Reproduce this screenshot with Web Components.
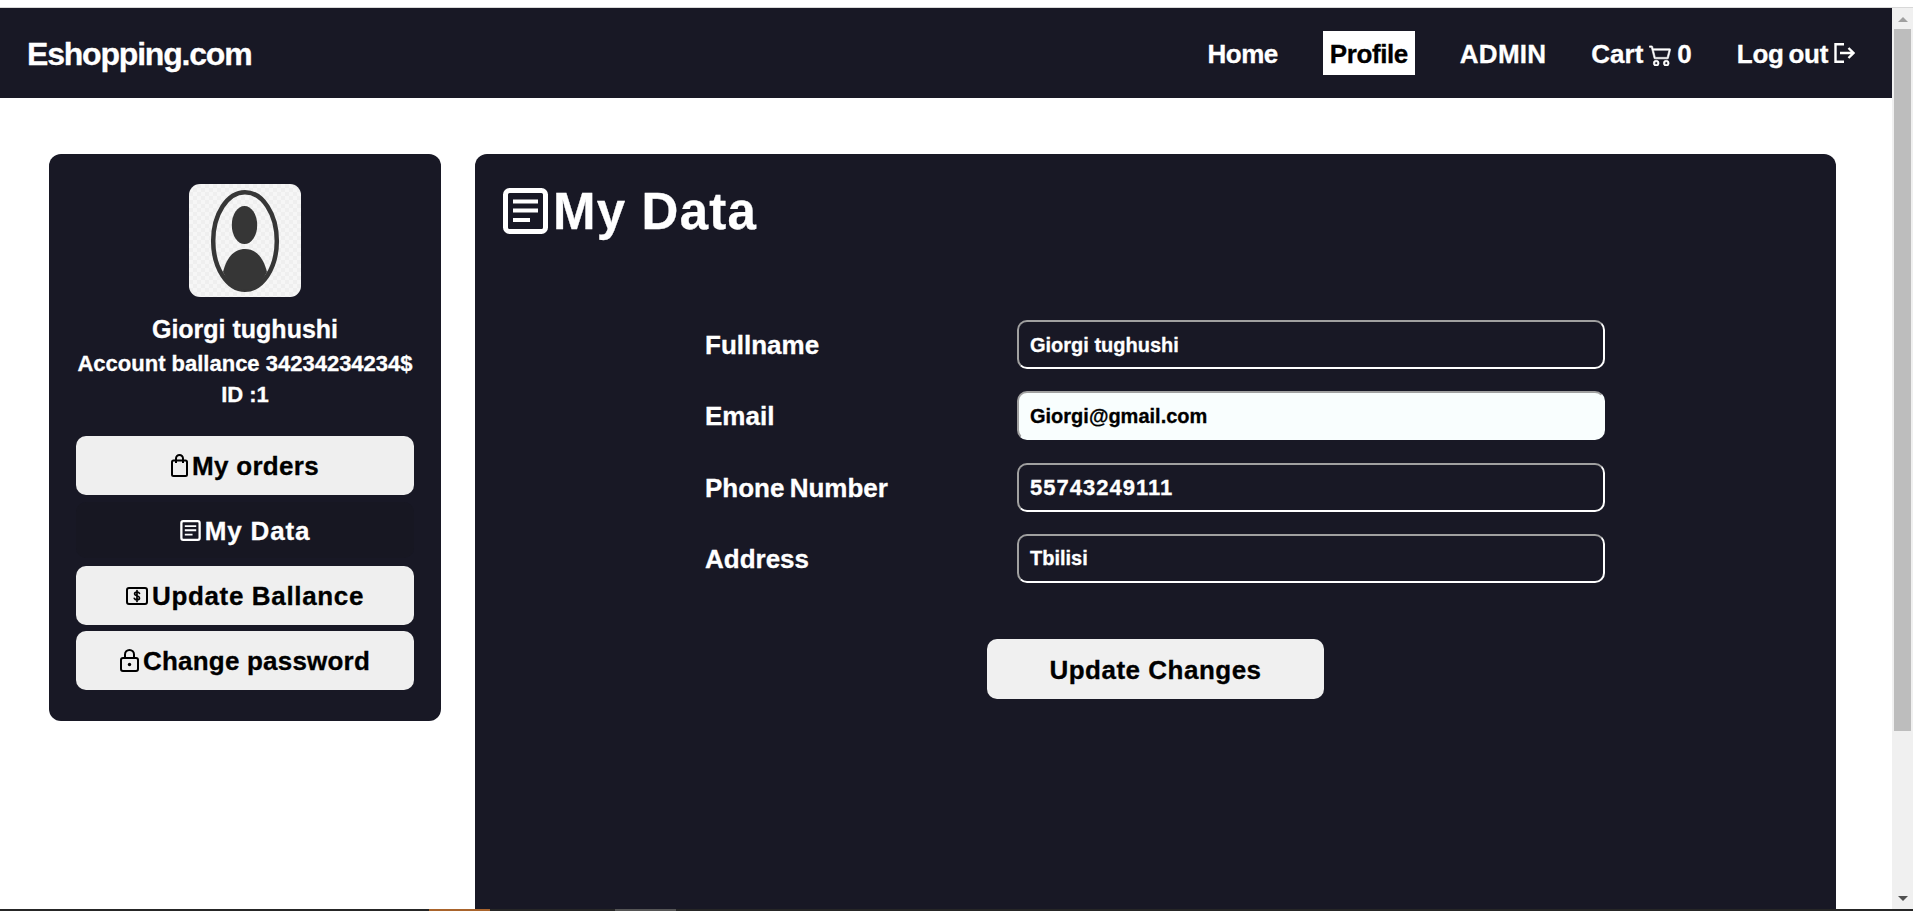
<!DOCTYPE html>
<html>
<head>
<meta charset="utf-8">
<title>Eshopping.com</title>
<style>
  html, body { margin: 0; height: 916px; overflow: hidden; background: #fff; }
  body { font-family: "Liberation Sans", Arial, sans-serif; font-weight: 700; -webkit-text-stroke: .3px; }
</style>
</head>
<body>
<shop-window>
  <shop-navbar></shop-navbar>
  <profile-page>
    <profile-sidebar slot="side" name="Giorgi tughushi" balance="34234234234" user-id="1"></profile-sidebar>
    <my-data-panel>
      <data-field label="Fullname" value="Giorgi tughushi"></data-field>
      <data-field label="Email" value="Giorgi@gmail.com" filled></data-field>
      <data-field label="Phone Number" value="55743249111" style="--value-size: 22px; --value-spacing: 1px"></data-field>
      <data-field label="Address" value="Tbilisi"></data-field>
    </my-data-panel>
  </profile-page>
</shop-window>

<script>
const icons = {
  bag: `<svg viewBox="0 0 17 23" width="17" height="23" fill="none" stroke="currentColor" stroke-width="2"><rect x="1" y="6.500" width="15" height="15.500" rx="1.500"/><path d="M5 9V4.500a3.500 3.500 0 0 1 7 0V9"/></svg>`,
  data: `<svg viewBox="0 0 45 46" width="21" height="21" fill="none" stroke="currentColor"><rect x="2.500" y="2.500" width="40" height="41" rx="4" stroke-width="5"/><path stroke-width="4" d="M10 13.500h25M10 22.500h25M10 32h17"/></svg>`,
  cash: `<svg viewBox="0 0 22 18" width="22" height="18" fill="none" stroke="currentColor" stroke-linecap="round"><rect x="1" y="1" width="20" height="16" rx="2" stroke-width="2"/><path stroke-width="1.700" d="M13.500 6.300C13 5.300 12.200 5 11 5c-1.400 0-2.400.7-2.400 1.900 0 2.500 4.900 1.300 4.900 4 0 1.200-1 1.900-2.500 1.900-1.300 0-2.200-.5-2.700-1.500M11 3.600v10.800"/></svg>`,
  lock: `<svg viewBox="0 0 19 23" width="19" height="23" fill="none" stroke="currentColor" stroke-width="2"><rect x="1" y="9" width="17" height="13" rx="2"/><path d="M5 9V5.500a4.500 4.500 0 0 1 9 0V9"/><circle cx="9.500" cy="15.500" r="1.700" fill="currentColor" stroke="none"/></svg>`,
  cart: `<svg viewBox="0 0 16 16" fill="currentColor" stroke="currentColor" stroke-width=".45"><path d="M0 2.500A.5.5 0 0 1 .5 2H2a.5.5 0 0 1 .485.379L2.890 4H14.500a.5.5 0 0 1 .485.621l-1.500 6A.5.5 0 0 1 13 11H4a.5.5 0 0 1-.485-.379L1.610 3H.5a.5.5 0 0 1-.5-.5zM3.140 5l1.250 5h8.220l1.250-5H3.140zM5 13a1 1 0 1 0 0 2 1 1 0 0 0 0-2zm-2 1a2 2 0 1 1 4 0 2 2 0 0 1-4 0zm9-1a1 1 0 1 0 0 2 1 1 0 0 0 0-2zm-2 1a2 2 0 1 1 4 0 2 2 0 0 1-4 0z"/></svg>`,
  logout: `<svg viewBox="0 0 21 20" fill="none" stroke="currentColor" stroke-width="2.400"><path d="M10 1.200H1.500v17.600H10"/><path d="M6 10h13.500M14.500 5l5 5-5 5"/></svg>`
};

class ShopWindow extends HTMLElement {
  constructor(){
    super();
    this.attachShadow({mode: 'open'});
    this.shadowRoot.innerHTML = `
      <style>
        :host { display: flex; flex-direction: column; height: 916px; box-sizing: border-box; padding: 7px 0 5px; }
        .top { height: 1px; background: #d8d8d8; margin-right: 7px; flex: none; }
        .middle { flex: 1; display: flex; min-height: 0; margin-right: 7px; }
        .content { flex: 1; min-width: 0; display: flex; flex-direction: column; overflow: hidden; }
        .bar { flex: none; width: 21px; background: #f0f0f0; display: flex; flex-direction: column; align-items: center; }
        .arrow { width: 0; height: 0; border-left: 5px solid transparent; border-right: 5px solid transparent; flex: none; }
        .up { border-bottom: 5px solid #a0a0a0; margin-top: 9px; }
        .down { border-top: 5px solid #505050; margin: auto 0 8px; }
        .thumb { width: 17px; height: 702px; background: #bdbdbd; margin-top: 7px; flex: none; }
        .dock { flex: none; height: 2px; background: #262626; display: flex; margin-right: 7px; }
        .dock i { display: block; height: 2px; }
      </style>
      <div class="top"></div>
      <div class="middle">
        <div class="content"><slot></slot></div>
        <div class="bar">
          <div class="arrow up"></div>
          <div class="thumb"></div>
          <div class="arrow down"></div>
        </div>
      </div>
      <div class="dock">
        <i style="width:429px"></i><i style="width:61px;background:#a9642c"></i>
        <i style="width:125px"></i><i style="width:61px;background:#555"></i>
      </div>
    `;
  }
}

class ShopNavbar extends HTMLElement {
  constructor(){
    super();
    this.attachShadow({mode: 'open'});
    this.shadowRoot.innerHTML = `
      <style>
        :host { display: flex; flex: none; height: 90px; align-items: center; justify-content: space-between; background: #181825; color: #fff; padding: 0 37px 0 27px; }
        .logo { font-size: 32px; letter-spacing: -1.2px; }
        nav { display: flex; gap: 45px; font-size: 26px; }
        a { display: flex; align-items: center; box-sizing: border-box; height: 44px; padding-top: 2px; color: inherit; text-decoration: none; }
        a.home { letter-spacing: -.5px; }
        a.active { background: #fff; color: #000; padding: 2px 7px 0; letter-spacing: -.4px; }
        a.admin { letter-spacing: .25px; }
        a.out { letter-spacing: -.3px; word-spacing: -2px; }
        .cart { display: block; width: 23px; height: 23px; margin: -2px 5px 0 6px; }
        .out svg { display: block; width: 21px; height: 20px; margin: -2px 0 0 6px; }
      </style>
      <a class="logo" href="#">Eshopping.com</a>
      <nav>
        <a class="home" href="#">Home</a>
        <a class="active" href="#">Profile</a>
        <a class="admin" href="#">ADMIN</a>
        <a href="#">Cart<span class="cart">${icons.cart}</span>0</a>
        <a class="out" href="#">Log out${icons.logout}</a>
      </nav>
    `;
  }
}

class ProfilePage extends HTMLElement {
  constructor(){
    super();
    this.attachShadow({mode: 'open'});
    this.shadowRoot.innerHTML = `
      <style>
        :host { display: flex; flex: 1; min-height: 0; align-items: flex-start; gap: 34px; padding: 56px 56px 0 49px; }
      </style>
      <slot name="side"></slot>
      <slot></slot>
    `;
  }
}

class ProfileSidebar extends HTMLElement {
  constructor(){
    super();
    this.attachShadow({mode: 'open'});
    const name = this.getAttribute('name');
    const balance = this.getAttribute('balance');
    const id = this.getAttribute('user-id');
    this.shadowRoot.innerHTML = `
      <style>
        :host { display: block; flex: none; width: 392px; height: 567px; box-sizing: border-box; padding: 30px 27px 0; background: #181825; border-radius: 12px; color: #fff; text-align: center; }
        .avatar { display: block; width: 112px; height: 113px; margin: 0 auto; }
        h2 { margin: 17px 0 0; font-size: 25px; line-height: 30px; }
        p { margin: 4px 0 0; font-size: 22px; line-height: 31px; white-space: nowrap; }
        .menu { display: flex; flex-direction: column; margin-top: 26px; }
        side-button[current] { margin: 7px 0 8px; }
        side-button[current] + side-button + side-button { margin-top: 6px; }
      </style>
      <svg class="avatar" viewBox="0 0 112 113">
        <defs>
          <pattern id="check" width="8" height="8" patternUnits="userSpaceOnUse">
            <rect width="8" height="8" fill="#f6f6f6"/>
            <rect width="4" height="4" fill="#efefef"/>
            <rect x="4" y="4" width="4" height="4" fill="#efefef"/>
          </pattern>
        </defs>
        <rect width="112" height="113" rx="11" fill="url(#check)"/>
        <ellipse cx="56" cy="57" rx="31.800" ry="48.800" fill="none" stroke="#363636" stroke-width="4.500"/>
        <ellipse cx="55.500" cy="41" rx="12.700" ry="19" fill="#363636"/>
        <path d="M34 88C38 72 46 65 56 65s18 7 22 23C72 100 64 106 56 106s-16-6-22-18z" fill="#363636"/>
      </svg>
      <h2>${name}</h2>
      <p>Account ballance ${balance}$<br>ID :${id}</p>
      <div class="menu">
        <side-button icon="bag" style="letter-spacing:.3px">My orders</side-button>
        <side-button icon="data" current style="letter-spacing:.8px">My Data</side-button>
        <side-button icon="cash" style="letter-spacing:.65px">Update Ballance</side-button>
        <side-button icon="lock" style="letter-spacing:.2px">Change password</side-button>
      </div>
    `;
  }
}

class SideButton extends HTMLElement {
  constructor(){
    super();
    this.attachShadow({mode: 'open'});
    this.shadowRoot.innerHTML = `
      <style>
        :host { display: flex; align-items: center; justify-content: center; height: 59px; background: #efefef; border-radius: 10px; color: #000; font-size: 26px; }
        :host([current]) { background: #171722; color: #fff; height: 56px; }
        svg { display: block; margin-right: 4px; flex: none; }
        span { padding-top: 2px; }
      </style>
      ${icons[this.getAttribute('icon')]}<span><slot></slot></span>
    `;
  }
}

class MyDataPanel extends HTMLElement {
  constructor(){
    super();
    this.attachShadow({mode: 'open'});
    this.shadowRoot.innerHTML = `
      <style>
        :host { display: block; flex: 1; min-width: 0; height: 755px; box-sizing: border-box; padding: 29px 28px 0; background: #181825; border-radius: 12px 12px 0 0; color: #fff; }
        h1 { display: flex; align-items: center; margin: 0; height: 56px; font-size: 51px; letter-spacing: 1.2px; }
        h1 svg { width: 45px; height: 46px; margin-right: 5px; flex: none; }
        form { display: flex; flex-direction: column; gap: 22.330px; width: 899px; margin: 81px 0 0 203px; }
        button { display: block; width: 337px; height: 60px; margin: 34px auto 0 281px; padding: 3px 0 0; border: 0; border-radius: 10px; background: #f0f0f0; color: #000; font: inherit; font-size: 26px; letter-spacing: .5px; -webkit-text-stroke: .3px; }
      </style>
      <h1>${icons.data}My Data</h1>
      <form onsubmit="return false">
        <slot></slot>
        <button>Update Changes</button>
      </form>
    `;
  }
}

class DataField extends HTMLElement {
  constructor(){
    super();
    this.attachShadow({mode: 'open'});
    this.shadowRoot.innerHTML = `
      <style>
        :host { display: flex; align-items: center; height: 49px; color: #fff; font-size: 26px; }
        label { flex: none; width: 312px; margin-left: -1px; padding-top: 2px; word-spacing: -2px; }
        .input { flex: none; width: 588px; height: 49px; box-sizing: border-box; padding: 1px 11px 0; display: flex; align-items: center; border: 2px solid; border-color: #a0a0a0 #fff #fff #a0a0a0; border-radius: 10px; font-size: var(--value-size, 20px); letter-spacing: var(--value-spacing, 0); outline: none; }
        :host([filled]) .input { background: #f9fefe; color: #000; border-color: #a0a0a0 #f9fefe #f9fefe #a0a0a0; }
      </style>
      <label>${this.getAttribute('label')}</label>
      <div class="input" role="textbox" contenteditable="true">${this.getAttribute('value')}</div>
    `;
  }
}

customElements.define('shop-window', ShopWindow);
customElements.define('shop-navbar', ShopNavbar);
customElements.define('profile-page', ProfilePage);
customElements.define('side-button', SideButton);
customElements.define('profile-sidebar', ProfileSidebar);
customElements.define('my-data-panel', MyDataPanel);
customElements.define('data-field', DataField);
</script>
</body>
</html>
